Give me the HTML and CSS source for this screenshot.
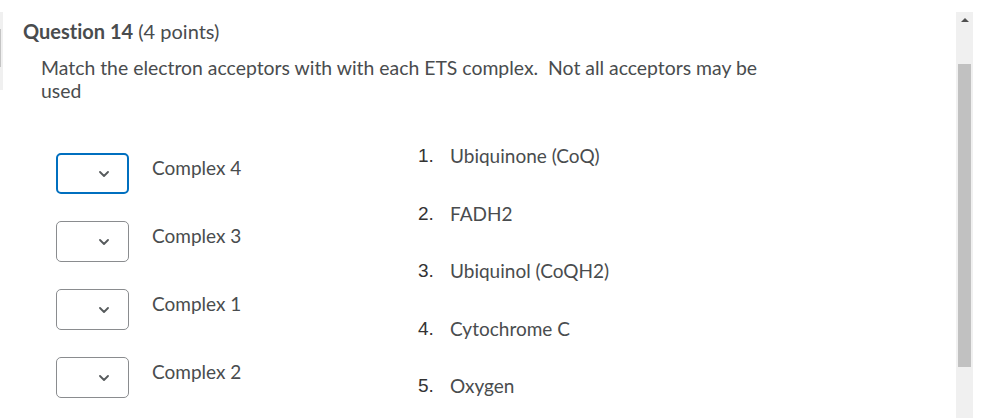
FILE: index.html
```html
<!DOCTYPE html>
<html lang="en">
<head>
    <meta charset="UTF-8">
    <title>Question 14</title>
    <link rel="stylesheet" href="styles.css">
</head>
<body>
    <div class="frame">
        <div class="rail"><div class="rail-line"></div></div>
        <div class="quiz">
            <h2 class="q-title"><strong>Question 14</strong> (4 points)</h2>
            <p class="q-text">Match the electron acceptors with with each ETS complex.&nbsp; Not all acceptors may be used</p>
            <div class="match">
                <div class="pairs">
                    <div class="pair">
                        <div class="select focused"><svg viewBox="0 0 10 6"><path d="M1 1l4 4 4-4"/></svg></div>
                        <span class="pair-label">Complex 4</span>
                    </div>
                    <div class="pair">
                        <div class="select"><svg viewBox="0 0 10 6"><path d="M1 1l4 4 4-4"/></svg></div>
                        <span class="pair-label">Complex 3</span>
                    </div>
                    <div class="pair">
                        <div class="select"><svg viewBox="0 0 10 6"><path d="M1 1l4 4 4-4"/></svg></div>
                        <span class="pair-label">Complex 1</span>
                    </div>
                    <div class="pair">
                        <div class="select"><svg viewBox="0 0 10 6"><path d="M1 1l4 4 4-4"/></svg></div>
                        <span class="pair-label">Complex 2</span>
                    </div>
                </div>
                <ol class="choices">
                    <li><span class="num">1.</span>Ubiquinone (CoQ)</li>
                    <li><span class="num">2.</span>FADH2</li>
                    <li><span class="num">3.</span>Ubiquinol (CoQH2)</li>
                    <li><span class="num">4.</span>Cytochrome C</li>
                    <li><span class="num">5.</span>Oxygen</li>
                </ol>
            </div>
        </div>
        <div class="scrollbar">
            <div class="arrow"></div>
            <div class="thumb"></div>
        </div>
    </div>
</body>
</html>
```

FILE: styles.css
```css
body {
    margin: 0;
    background: #fff;
    font-family: 'Lato', sans-serif;
    font-variant-ligatures: none;
    color: #494c4e;
    overflow: hidden;
}
.frame {
    display: flex;
    height: 406px;
    margin-top: 12px;
}
.rail {
    width: 3px;
    height: 78px;
    background: #f0f0f0;
    padding-top: 17px;
    box-sizing: border-box;
}
.rail-line {
    width: 1px;
    height: 38px;
    background: #c4c4c4;
}
.quiz {
    flex: 1;
    padding-left: 20px;
}
.q-title {
    margin: 8px 0 0;
    font-size: 20px;
    font-weight: normal;
    line-height: 22px;
}
.q-title strong {
    font-weight: bold;
}
.q-text {
    margin: 14px 0 0 18px;
    width: 750px;
    font-size: 19.4px;
    line-height: 23px;
}
.match {
    display: flex;
    margin-top: 51px;
}
.pairs {
    display: flex;
    flex-direction: column;
    gap: 27px;
    margin-left: 33px;
    width: 363px;
}
.pair {
    display: flex;
    align-items: flex-start;
}
.select {
    width: 73px;
    height: 41px;
    box-sizing: border-box;
    border: 1px solid #8a8c8f;
    border-radius: 5px;
    display: flex;
    align-items: center;
    justify-content: flex-end;
    padding-right: 19px;
}
.select.focused {
    border: 2px solid #006fbf;
    padding-right: 18px;
}
.select svg {
    width: 10px;
    height: 6px;
    fill: none;
    stroke: #565a5c;
    stroke-width: 1.8;
    stroke-linecap: round;
    stroke-linejoin: round;
}
.pair-label {
    margin-left: 23px;
    padding-top: 4px;
    font-size: 19px;
    line-height: 22px;
}
.choices {
    list-style: none;
    margin: -8px 0 0;
    padding: 0;
    display: flex;
    flex-direction: column;
    gap: 35.5px;
}
.choices li {
    font-size: 19px;
    line-height: 22px;
    display: flex;
}
.num {
    width: 32px;
    margin-left: -1px;
    font-family: 'Liberation Sans', Arial, sans-serif;
    color: #333;
}
.scrollbar {
    width: 17px;
    margin-right: 25px;
    background: #f0f0f0;
    position: relative;
}
.arrow {
    position: absolute;
    top: 6px;
    left: 5px;
    width: 0;
    height: 0;
    border-left: 4px solid transparent;
    border-right: 4px solid transparent;
    border-bottom: 4px solid #505050;
}
.thumb {
    margin: 52px 2px 0;
    height: 303px;
    background: #c1c1c1;
}
```
